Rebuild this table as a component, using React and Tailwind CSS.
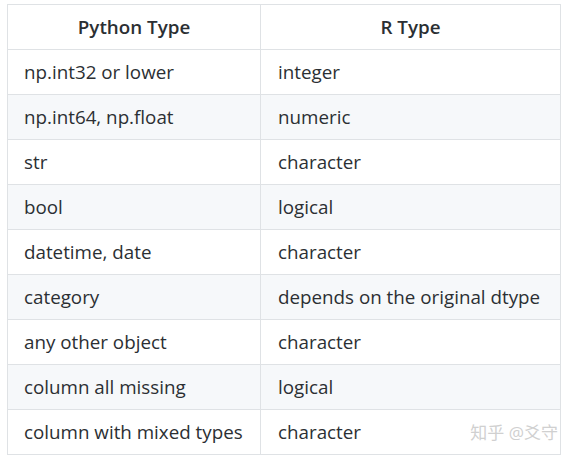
const rows = [
  ['np.int32 or lower', 'integer'],
  ['np.int64, np.float', 'numeric'],
  ['str', 'character'],
  ['bool', 'logical'],
  ['datetime, date', 'character'],
  ['category', 'depends on the original dtype'],
  ['any other object', 'character'],
  ['column all missing', 'logical'],
  ['column with mixed types', 'character'],
];

export default function App() {
  return (
    <div className="w-[573px] h-[458px] bg-white pt-[4px] pl-[7px] text-[#2b2f33] font-['Open_Sans','Noto_Sans_CJK_SC',sans-serif]">
      <table className="border-collapse text-[18.8px] relative">
        <thead>
          <tr className="h-[45px]">
            <th className="w-[253px] border border-[#dfe2e5] font-semibold text-center">Python Type</th>
            <th className="w-[300px] border border-[#dfe2e5] font-semibold text-center">R Type</th>
          </tr>
        </thead>
        <tbody>
          {rows.map(([py, r], i) => (
            <tr key={py} className={i % 2 === 1 ? 'h-[45px] bg-[#f6f8fa]' : 'h-[45px] bg-white'}>
              <td className="border border-[#dfe2e5] pl-4 whitespace-nowrap">{py}</td>
              <td className="border border-[#dfe2e5] pl-[17px] whitespace-nowrap relative">
                {r}
                {i === rows.length - 1 && (
                  <span className="absolute right-[2px] top-[10px] text-[17px] text-[#d0d0d0]">知乎 @爻守</span>
                )}
              </td>
            </tr>
          ))}
        </tbody>
      </table>
    </div>
  );
}
